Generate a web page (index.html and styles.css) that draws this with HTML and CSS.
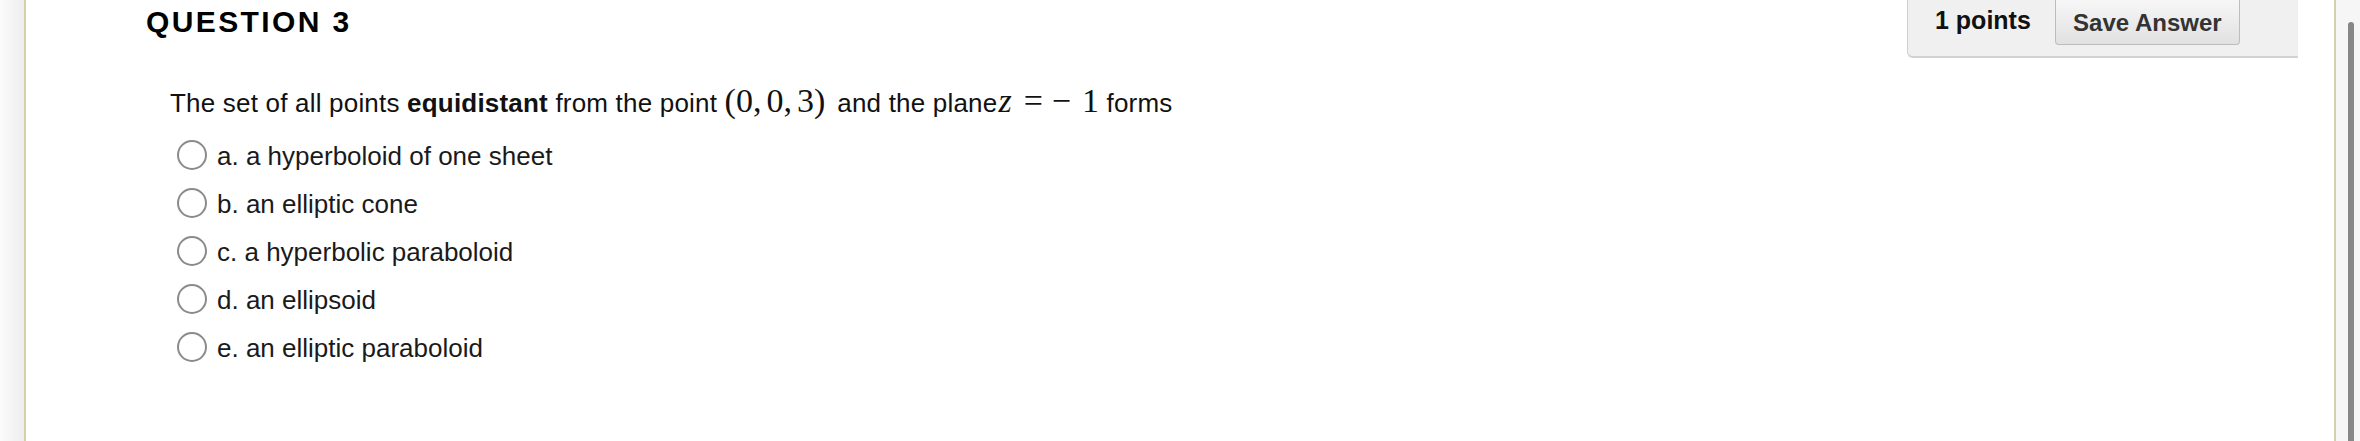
FILE: index.html
```html
<!DOCTYPE html>
<html>
<head>
<meta charset="utf-8">
<link rel="stylesheet" href="styles.css">
</head>
<body>
<div class="page">
  <div class="gutter-left"></div>
  <div class="main">
    <div class="header">
      <h2 class="qtitle">QUESTION 3</h2>
      <div class="points-box">
        <span class="points">1 points</span>
        <button class="save">Save Answer</button>
      </div>
    </div>
    <p class="question">The set of all points <b>equidistant</b> from the point <span class="math paren">(0,<span class="thin"></span>0,<span class="thin"></span>3)</span>and the plane<span class="math eq"><i class="mz">z</i><span class="op-eq">=</span><span class="op-minus">−</span><span class="one">1</span></span> forms</p>
    <ul class="options">
      <li class="option"><span class="radio"></span><span class="label">a. a hyperboloid of one sheet</span></li>
      <li class="option"><span class="radio"></span><span class="label">b. an elliptic cone</span></li>
      <li class="option"><span class="radio"></span><span class="label">c. a hyperbolic paraboloid</span></li>
      <li class="option"><span class="radio"></span><span class="label">d. an ellipsoid</span></li>
      <li class="option"><span class="radio"></span><span class="label">e. an elliptic paraboloid</span></li>
    </ul>
  </div>
  <div class="gutter-right"><div class="thumb"></div></div>
</div>
</body>
</html>
```
FILE: styles.css
```css
html, body {
  margin: 0;
  padding: 0;
  background: #ffffff;
}
body {
  font-family: "Liberation Sans", Arial, sans-serif;
  color: #1a1a1a;
}
.page {
  display: flex;
  height: 100vh;
  overflow: hidden;
}
.gutter-left {
  width: 24px;
  flex: none;
  background: linear-gradient(to right, #fbfbfb, #ededed);
  border-right: 2px solid #d6cfae;
}
.gutter-right {
  width: 24px;
  flex: none;
  background: #f6f6f6;
  border-left: 2px solid #d6cfae;
  display: flex;
  justify-content: flex-start;
}
.thumb {
  width: 6px;
  margin-left: 12px;
  margin-top: 22px;
  background: #878787;
  border-radius: 3px 3px 0 0;
  height: 460px;
}
.main {
  flex: 1;
  min-width: 0;
}
.header {
  display: flex;
  justify-content: space-between;
  align-items: flex-start;
  padding-right: 36px;
}
.qtitle {
  margin: 0;
  padding: 4px 0 0 120px;
  font-size: 30px;
  line-height: 36px;
  font-weight: bold;
  letter-spacing: 2.4px;
  color: #000;
}
.points-box {
  display: flex;
  align-items: flex-start;
  height: 58px;
  box-sizing: border-box;
  width: 391px;
  padding-left: 27px;
  background: #f0f0f0;
  border-left: 1px solid #cfcfcf;
  border-bottom: 2px solid #d2d2d2;
  border-bottom-left-radius: 6px;
}
.points {
  font-size: 25px;
  line-height: 30px;
  padding-top: 5px;
  font-weight: bold;
  color: #111;
}
.save {
  margin-left: 24px;
  width: 185px;
  height: 45px;
  box-sizing: border-box;
  padding: 8px 0 6px 0;
  font-family: "Liberation Sans", Arial, sans-serif;
  font-size: 24px;
  line-height: 30px;
  font-weight: bold;
  color: #333;
  background: linear-gradient(to bottom, #f7f7f7, #e1e1e1);
  border: 1px solid #bdbdbd;
  border-top: none;
  border-radius: 0 0 4px 4px;
}
.question {
  margin: 25px 0 0 0;
  padding-left: 144px;
  font-size: 26px;
  line-height: 40px;
  letter-spacing: 0.2px;
  color: #111;
}
.question b {
  font-weight: bold;
}
.math {
  font-family: "Liberation Serif", "Times New Roman", serif;
  font-size: 34px;
  line-height: 26px;
  letter-spacing: 0;
  color: #111;
}
.paren {
  margin-right: 12px;
}
.thin {
  display: inline-block;
  width: 5px;
}
.eq {
  margin-left: 1px;
}
.mz {
  font-style: italic;
}
.op-eq {
  margin-left: 12px;
}
.op-minus {
  margin-left: 9px;
}
.one {
  margin-left: 11px;
}
.options {
  list-style: none;
  margin: 9px 0 0 0;
  padding: 0 0 0 151px;
}
.option {
  display: flex;
  align-items: center;
  height: 48px;
  font-size: 26px;
  line-height: 48px;
  color: #1a1a1a;
}
.radio {
  width: 30px;
  height: 30px;
  box-sizing: border-box;
  border: 2.5px solid #8b8b8b;
  border-radius: 50%;
  background: #fff;
  margin-right: 10px;
  margin-top: -3px;
  flex: none;
}
```
